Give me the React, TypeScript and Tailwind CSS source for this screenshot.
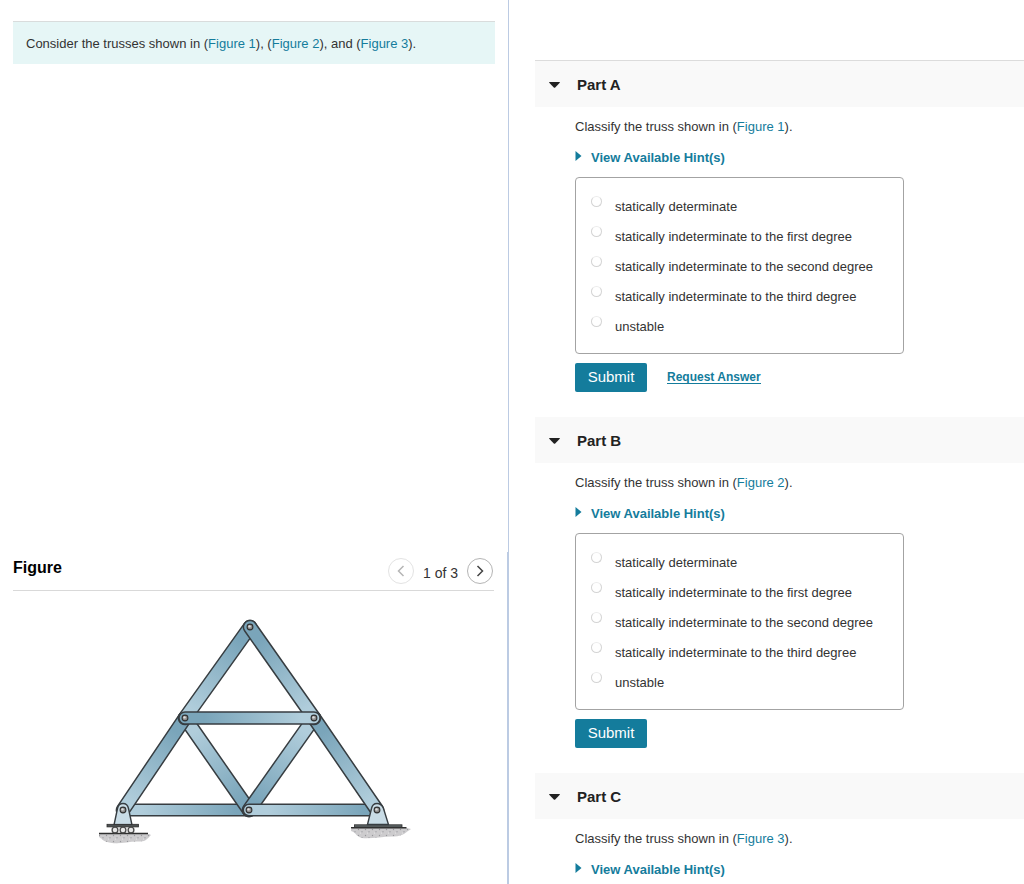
import React from "react";

type Point = { x: number; y: number };

const apex: Point = { x: 250, y: 627 };
const midLeft: Point = { x: 185, y: 718 };
const midRight: Point = { x: 314, y: 718 };
const baseLeft: Point = { x: 123, y: 810 };
const baseMid: Point = { x: 249, y: 810 };
const baseRight: Point = { x: 377, y: 810 };

const DARK = "#7aa5ba";
const LIGHT = "#b0cddb";

function Member({ id, from, to, start, end, half = 6.6 }: { id: string; from: Point; to: Point; start: string; end: string; half?: number }) {
  const dx = to.x - from.x;
  const dy = to.y - from.y;
  const length = Math.hypot(dx, dy);
  const angle = (Math.atan2(dy, dx) * 180) / Math.PI;
  return (
    <g transform={`translate(${from.x} ${from.y}) rotate(${angle})`}>
      <linearGradient id={id} gradientUnits="userSpaceOnUse" x1="0" y1="0" x2={length} y2="0">
        <stop offset="0.15" stopColor={start} />
        <stop offset="0.9" stopColor={end} />
      </linearGradient>
      <rect x={-half} y={-half} width={length + 2 * half} height={2 * half} rx={half} fill={`url(#${id})`} stroke="#373d41" strokeWidth="1.5" />
    </g>
  );
}

function Pin({ at }: { at: Point }) {
  return (
    <g>
      <circle cx={at.x} cy={at.y} r="2.9" fill="#8f8f8f" stroke="#303030" strokeWidth="1.1" />
      <circle cx={at.x - 0.5} cy={at.y - 0.6} r="1.2" fill="#dedede" />
    </g>
  );
}

function Truss() {
  return (
    <svg viewBox="90 610 330 240" className="block w-[330px] max-w-full" role="img" aria-label="Truss with a roller support and a pin support">
      <defs>
        <pattern id="soil" width="7" height="6" patternUnits="userSpaceOnUse">
          <rect width="7" height="6" fill="#cdccce" />
          <circle cx="1.5" cy="1.5" r="0.7" fill="#98989c" />
          <circle cx="5" cy="3.8" r="0.7" fill="#a2a2a6" />
          <circle cx="3.5" cy="5" r="0.5" fill="#eeeeee" />
        </pattern>
        <filter id="soft" x="-10%" y="-20%" width="120%" height="140%">
          <feGaussianBlur stdDeviation="0.7" />
        </filter>
      </defs>
      <Member id="m1" from={baseLeft} to={baseMid} start={LIGHT} end={DARK} half={5.7} />
      <Member id="m2" from={midLeft} to={baseMid} start={LIGHT} end={DARK} />
      <Member id="m3" from={midLeft} to={baseLeft} start={DARK} end={LIGHT} />
      <Member id="m4" from={apex} to={midLeft} start={DARK} end={LIGHT} />
      <Member id="m5" from={midRight} to={baseMid} start={LIGHT} end={DARK} />
      <Member id="m6" from={baseMid} to={baseRight} start={LIGHT} end={DARK} half={5.7} />
      <Member id="m7" from={midRight} to={baseRight} start={DARK} end={LIGHT} />
      <Member id="m8" from={apex} to={midRight} start={DARK} end={LIGHT} />
      <Member id="m9" from={midLeft} to={midRight} start={DARK} end={LIGHT} half={6} />

      <path d="M99 834H149L151 835C148 838 146 842 139 841.5C130 841 121 844 112 843C104 842 103 840 99 837Z" fill="url(#soil)" filter="url(#soft)" />
      <path d="M99 833.5H148" stroke="#2f2f2f" strokeWidth="1.4" />
      <path d="M114 825L117.5 808.5Q118.5 803.5 123 803.5Q127.5 803.5 128.5 808.5L132 825Z" fill="#c9dce6" stroke="#373d41" strokeWidth="1.4" />
      <rect x="107" y="824.3" width="31.5" height="2.6" fill="#4d5152" stroke="#2d2d2d" strokeWidth="0.8" />
      {[115, 123, 131].map((x) => (
        <circle key={x} cx={x} cy="830" r="2.9" fill="#e8e8e8" stroke="#4a4a4a" strokeWidth="1.3" />
      ))}

      <path d="M352 828H407L411 829C406 832 404 836 394 836.5C384 836 372 839 362 838C355 836 357 833 351 831Z" fill="url(#soil)" filter="url(#soft)" />
      <path d="M351 827.7H406.5" stroke="#2f2f2f" strokeWidth="1.4" />
      <rect x="354.5" y="824.8" width="47.5" height="2.4" fill="#5d6566" stroke="#2d2d2d" strokeWidth="0.8" />
      <path d="M367.5 824.5L371.5 808.5Q372.5 803.5 377 803.5Q381.5 803.5 383.5 808.5L388.5 824.5Z" fill="#c9dce6" stroke="#373d41" strokeWidth="1.4" />
      {[apex, midLeft, midRight, baseLeft, baseMid, baseRight].map((p) => (
        <Pin key={`${p.x}-${p.y}`} at={p} />
      ))}
    </svg>
  );
}

function FigureLink({ n }: { n: number }) {
  return (
    <a href={`#figure-${n}`} className="text-[#147c9c]">
      Figure {n}
    </a>
  );
}

const choices = [
  "statically determinate",
  "statically indeterminate to the first degree",
  "statically indeterminate to the second degree",
  "statically indeterminate to the third degree",
  "unstable",
];

function Part({ letter, figure, children }: { letter: string; figure: number; children?: React.ReactNode }) {
  return (
    <section className="pb-[25px]">
      <h2 className="bg-[#f9f9f9]">
        <button type="button" className="flex h-[46px] w-full items-center gap-[17px] pt-0.5 pl-3.5 text-[15px] font-bold text-[#222]">
          <svg viewBox="0 0 11 6" className="h-1.5 w-[11px] fill-current" aria-hidden="true">
            <path d="M0 0.5Q0 0 0.7 0H10.3Q11 0 11 0.5L6.2 5.5Q5.5 6 4.8 5.5Z" />
          </svg>
          Part {letter}
        </button>
      </h2>
      <div className="px-10 pt-2.5">
        <p className="leading-5">
          Classify the truss shown in (<FigureLink n={figure} />).
        </p>
        <button type="button" className="mt-[11px] flex h-5 items-center gap-[9px] font-bold text-[#147c9c]">
          <svg viewBox="0 0 6 10" className="mb-1 h-2.5 w-[7px] fill-current" aria-hidden="true">
            <path d="M0 0L6 5L0 10Z" />
          </svg>
          View Available Hint(s)
        </button>
        {children}
      </div>
    </section>
  );
}

function AnswerForm({ name, requestable }: { name: string; requestable?: boolean }) {
  return (
    <form onSubmit={(e) => e.preventDefault()}>
      <fieldset className="mt-[9px] w-[329px] max-w-full rounded-[4px] border border-[#a3a3a3] px-[15px] pt-[13px] pb-3">
        {choices.map((choice, i) => (
          <div key={choice} className="flex h-[30px] items-start gap-[13px]">
            <input
              type="radio"
              id={`${name}-${i}`}
              name={name}
              className="mt-[5px] h-[11px] w-[11px] shrink-0 appearance-none rounded-full border border-[#d4d4d4] border-t-[#ececec] checked:bg-[#147c9c]"
            />
            <label htmlFor={`${name}-${i}`} className="pt-1.5 leading-5">
              {choice}
            </label>
          </div>
        ))}
      </fieldset>
      <div className="mt-[9px] flex items-center gap-5">
        <button type="submit" className="h-[29px] w-[72px] rounded-[2px] bg-[#147c9c] text-[15px] text-white">
          Submit
        </button>
        {requestable && (
          <a href="#request-answer" className="border-b border-[#147c9c] text-[12px] leading-3 font-bold text-[#147c9c]">
            Request Answer
          </a>
        )}
      </div>
    </form>
  );
}

export default function App() {
  return (
    <div className="flex h-screen overflow-hidden bg-white font-['Liberation_Sans',Arial,sans-serif] text-[13px] text-[#333]">
      <div className="flex w-[calc(50%-3px)] shrink-0 flex-col">
        <div className="flex-1 border-r border-[#bccbe3] pt-[21px] pr-[13px] pl-[13px]">
          <p className="border-t border-[#d9dcdc] bg-[#e6f6f6] px-[13px] pt-3 pb-2.5 leading-5">
            Consider the trusses shown in (<FigureLink n={1} />), (<FigureLink n={2} />), and (<FigureLink n={3} />).
          </p>
        </div>
        <section className="h-[332px] border-r-2 border-[#bccbe3] pr-[13px] pl-[13px]">
          <header className="flex h-[39px] items-center border-b border-[#d9d9d9] pr-px">
            <h2 className="mb-1.5 flex-1 text-[16px] font-bold text-black">Figure</h2>
            <nav className="flex items-center gap-[9px]" aria-label="Figure navigation">
              <button type="button" disabled aria-label="Previous figure" className="flex h-[26px] w-[26px] items-center justify-center rounded-full border border-[#e3e3e3] text-[#b5b5b5]">
                <svg viewBox="0 0 8 12" className="h-3 w-2 fill-none stroke-current" strokeWidth="1.5" aria-hidden="true">
                  <path d="M6.5 1L1.5 6L6.5 11" />
                </svg>
              </button>
              <span className="pt-1 text-[14px] leading-5">1 of 3</span>
              <button type="button" aria-label="Next figure" className="flex h-[26px] w-[26px] items-center justify-center rounded-full border border-[#b5b5b5] text-[#444]">
                <svg viewBox="0 0 8 12" className="h-3 w-2 fill-none stroke-current" strokeWidth="1.5" aria-hidden="true">
                  <path d="M1.5 1L6.5 6L1.5 11" />
                </svg>
              </button>
            </nav>
          </header>
          <div className="pt-[19px] pl-[77px]">
            <Truss />
          </div>
        </section>
      </div>
      <main className="min-w-0 flex-1 overflow-y-auto pt-[60px] pl-[26px] [scrollbar-width:none]">
        <div className="border-t border-[#dcdcdc]">
          <Part letter="A" figure={1}>
            <AnswerForm name="part-a" requestable />
          </Part>
          <Part letter="B" figure={2}>
            <AnswerForm name="part-b" />
          </Part>
          <Part letter="C" figure={3} />
        </div>
      </main>
    </div>
  );
}
